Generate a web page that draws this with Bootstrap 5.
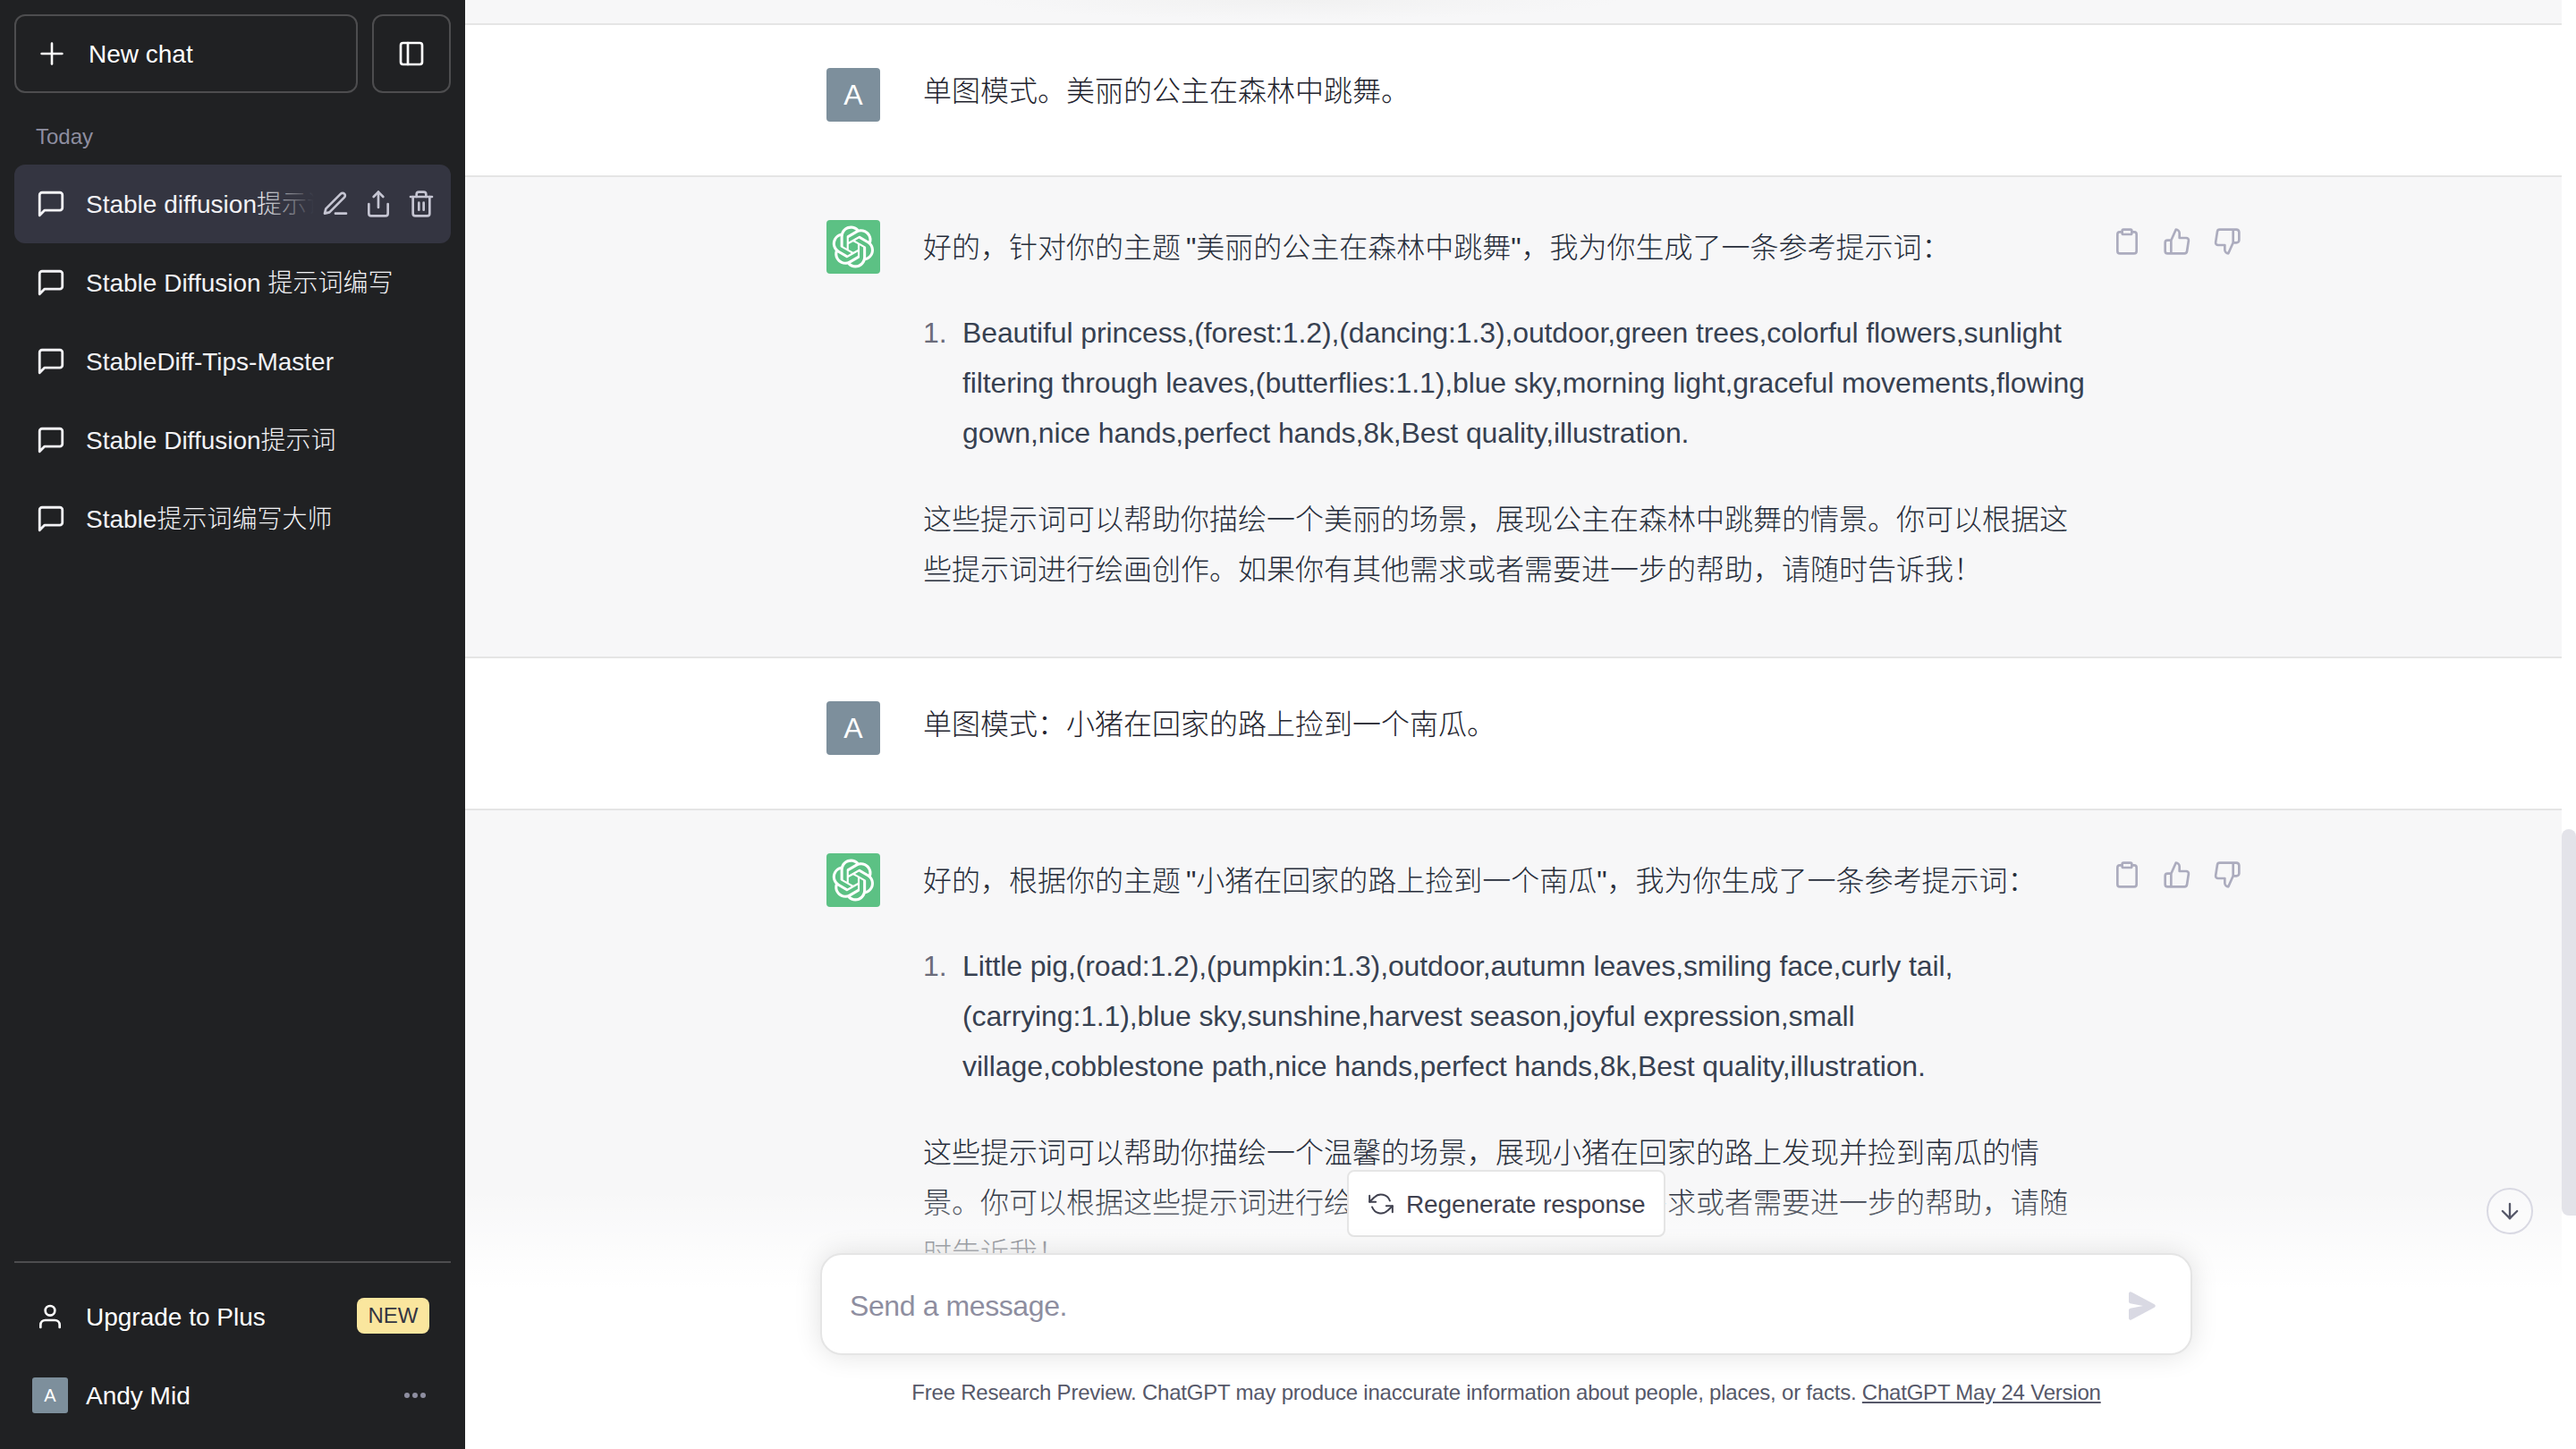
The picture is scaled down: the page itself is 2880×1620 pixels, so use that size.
<!DOCTYPE html>
<html lang="en">
<head>
<meta charset="utf-8">
<title>ChatGPT</title>
<link href="https://cdn.jsdelivr.net/npm/bootstrap@5.3.0/dist/css/bootstrap.min.css" rel="stylesheet">
<style>
html,body{height:100%;margin:0;overflow:hidden}
body{font-family:"Liberation Sans","Noto Sans CJK SC",sans-serif;background:#fff;font-weight:300}
.app-shell{height:1620px;width:2880px}
.side{width:520px;flex:none;background:#202123;color:#fff;padding:16px}
.ico{fill:none;stroke:currentColor;stroke-width:2;stroke-linecap:round;stroke-linejoin:round;flex:none}
.new-btn{flex:1;height:88px;border:2px solid #4d4d4f;border-radius:12px;padding:0 27px;gap:28px;font-size:28px;color:#fff}
.new-btn span{padding-top:2px}
.new-btn .ico{stroke-width:1.6}
.tog-btn{width:88px;height:88px;border:2px solid #4d4d4f;border-radius:12px;margin-left:16px}
.day{font-size:24px;color:#8e8ea0;padding:1px 24px 0;margin-top:32px;height:48px;line-height:32px}
.chat-it{height:88px;border-radius:12px;padding:0 24px;gap:22px;font-size:28px;color:#f2f2f5;white-space:nowrap}
.chat-it.on{background:#343541;padding-right:17px}
.chat-tx{position:relative;overflow:hidden;flex:1;padding-top:2px}
.chat-it.on .chat-tx::after{content:"";position:absolute;top:0;bottom:0;right:0;width:64px;background:linear-gradient(to right,rgba(52,53,65,0),#343541)}
.act-i{color:#c5c5d2;gap:16px;margin-left:-14px}
.foot-line{border-top:2px solid #4d4d4f;padding-top:16px}
.foot-it{height:88px;padding:0 24px;gap:24px;font-size:28px;color:#fff}
.foot-it .flex-grow-1{padding-top:2px}
.new-tag{background:#fae69e;color:#343541;font-size:24px;border-radius:8px;padding:0 9px;height:40px;line-height:40px;width:81px;text-align:center;margin-top:-2px}
.ava{width:60px;height:60px;border-radius:4px;flex:none;color:#fff;font-size:32px}
.ava-u{background:#7d8f9c}
.ava-g{background:#5cc184}
.ava-sm{width:40px;height:40px;font-size:20px;margin-left:-4px;margin-right:-4px;flex:none;border-radius:3px;color:#fff;background:#7d8f9c}
.dots{color:#8e8ea0;gap:3px;margin-right:4px}
.dots i{display:block;width:6px;height:6px;border-radius:50%;background:currentColor}
.main-pane{position:relative;overflow:hidden;background:#fff}
.scroll-col{width:2344px;height:1620px;overflow:hidden}
.topstub{height:28px;background:radial-gradient(ellipse 360px 22px at 930px 0,#f1f1f1,#f7f7f8);border-bottom:2px solid #e5e5e5}
.msg{border-bottom:2px solid #e5e5e5;color:#374151;font-size:32px;line-height:56px;padding-left:404px}
.msg-u{height:170px;background:#fff;padding-top:48px;color:#23242e}
.msg-a{height:538px;background:#f7f7f8;padding-top:48px}
.msg-tx{margin-left:48px;width:1306px;white-space:nowrap}
.msg-u .msg-tx{margin-top:-2px}
.msg-a .msg-tx{margin-top:3px}
.msg-tx p{margin:0 0 40px;word-spacing:-3px;color:#272e3b}
.msg-tx ol{margin:0 0 41px;padding:0;list-style:none;display:flex;letter-spacing:-.12px}
.msg-tx ol li{margin-top:-1px}
.num{width:44px;color:#6b6c7b;flex:none}
.acts{margin-left:24px;margin-top:8px;color:#acacbe;gap:24px;height:32px}
.sbar{position:absolute;right:0;top:927px;width:16px;height:432px;border-radius:8px 8px 0 8px;background:#e3e3e9}
.bottom-fade{position:absolute;left:0;bottom:0;width:2344px;height:330px;background:linear-gradient(to bottom,rgba(255,255,255,0) 40px,#fff 150px)}
.regen{position:absolute;left:986px;top:18px;width:356px;height:75px;background:#fff;border:2px solid #e5e5e5;border-radius:8px;gap:14px;font-size:28px;color:#40414f;padding-left:22px;letter-spacing:-.1px}
.regen .ico{stroke-width:1.7}
.regen span{padding-top:2px}
.down-btn{position:absolute;left:2260px;top:38px;width:52px;height:52px;border:2px solid #d9d9e3;border-radius:50%;color:#565869;background:rgba(255,255,255,.3)}
.ask{position:absolute;left:397px;top:111px;width:1534px;height:114px;background:#fff;border:2px solid #e5e5e5;border-radius:24px;box-shadow:0 0 30px rgba(0,0,0,.12);padding:3px 38px 0 31px;font-size:32px;color:#8e8ea0;letter-spacing:-.4px}
.legal{position:absolute;left:0;right:16px;top:251px;text-align:center;font-size:24px;line-height:32px;color:#565869;letter-spacing:-.22px}
.legal a{color:#565869}
</style>
</head>
<body>
<svg width="0" height="0" class="d-none">
  <symbol id="bloom" viewBox="0 0 41 41"><path d="M37.5324 16.8707C37.9808 15.5241 38.1363 14.0974 37.9886 12.6859C37.8409 11.2744 37.3934 9.91076 36.676 8.68622C35.6126 6.83404 33.9882 5.3676 32.0373 4.4985C30.0864 3.62941 27.9098 3.40259 25.8215 3.85078C24.8796 2.7893 23.7219 1.94125 22.4257 1.36341C21.1295 0.785575 19.7249 0.491269 18.3058 0.500197C16.1708 0.495044 14.0893 1.16803 12.3614 2.42214C10.6335 3.67624 9.34853 5.44666 8.6917 7.47815C7.30085 7.76286 5.98686 8.3414 4.8377 9.17505C3.68854 10.0087 2.73073 11.0782 2.02839 12.312C0.956464 14.1591 0.498905 16.2988 0.721698 18.4228C0.944492 20.5467 1.83612 22.5449 3.268 24.1293C2.81966 25.4759 2.66413 26.9026 2.81182 28.3141C2.95951 29.7256 3.40701 31.0892 4.12437 32.3138C5.18791 34.1659 6.8123 35.6322 8.76321 36.5013C10.7141 37.3704 12.8907 37.5973 14.9789 37.1492C15.9208 38.2107 17.0786 39.0587 18.3747 39.6366C19.6709 40.2144 21.0755 40.5087 22.4946 40.4998C24.6307 40.5054 26.7133 39.8321 28.4418 38.5772C30.1704 37.3223 31.4556 35.5506 32.1119 33.5179C33.5027 33.2332 34.8167 32.6547 35.9659 31.821C37.115 30.9874 38.0728 29.9178 38.7752 28.684C39.8458 26.8371 40.3023 24.6979 40.0789 22.5748C39.8556 20.4517 38.9639 18.4544 37.5324 16.8707ZM22.4978 37.8849C20.7443 37.8874 19.0459 37.2733 17.6994 36.1501C17.7601 36.117 17.8666 36.0586 17.936 36.0161L25.9004 31.4156C26.1003 31.3019 26.2663 31.137 26.3813 30.9378C26.4964 30.7386 26.5563 30.5124 26.5549 30.2825V19.0542L29.9213 20.998C29.9389 21.0068 29.9541 21.0198 29.9656 21.0359C29.977 21.052 29.9842 21.0707 29.9867 21.0902V30.3889C29.9842 32.375 29.1946 34.2791 27.7909 35.6841C26.3872 37.0892 24.4838 37.8806 22.4978 37.8849ZM6.39227 31.0064C5.51397 29.4888 5.19742 27.7107 5.49804 25.9832C5.55718 26.0187 5.66048 26.0818 5.73461 26.1244L13.699 30.7248C13.8975 30.8408 14.1233 30.902 14.3532 30.902C14.583 30.902 14.8088 30.8408 15.0073 30.7248L24.731 25.1103V28.9979C24.7321 29.0177 24.7283 29.0376 24.7199 29.0556C24.7115 29.0736 24.6988 29.0893 24.6829 29.1012L16.6317 33.7497C14.9096 34.7416 12.8643 35.0097 10.9447 34.4954C9.02506 33.9811 7.38785 32.7263 6.39227 31.0064ZM4.29707 13.6194C5.17156 12.0998 6.55279 10.9364 8.19885 10.3327C8.19885 10.4013 8.19491 10.5228 8.19491 10.6071V19.808C8.19351 20.0378 8.25334 20.2638 8.36823 20.4629C8.48312 20.6619 8.64893 20.8267 8.84863 20.9404L18.5723 26.5542L15.206 28.4979C15.1894 28.5089 15.1703 28.5155 15.1505 28.5173C15.1307 28.5191 15.1107 28.516 15.0924 28.5082L7.04046 23.8557C5.32135 22.8601 4.06716 21.2235 3.55289 19.3046C3.03862 17.3858 3.30624 15.3413 4.29707 13.6194ZM31.955 20.0556L22.2312 14.4411L25.5976 12.4981C25.6142 12.4872 25.6333 12.4805 25.6531 12.4787C25.6729 12.4769 25.6928 12.4801 25.7111 12.4879L33.7631 17.1364C34.9967 17.849 36.0017 18.8982 36.6606 20.1613C37.3194 21.4244 37.6047 22.849 37.4832 24.2684C37.3617 25.6878 36.8382 27.0432 35.9743 28.1759C35.1103 29.3086 33.9415 30.1717 32.6047 30.6641C32.6047 30.5947 32.6047 30.4733 32.6047 30.3889V21.188C32.6066 20.9586 32.5474 20.7328 32.4332 20.5338C32.319 20.3348 32.154 20.1698 31.955 20.0556ZM35.3055 15.0128C35.2464 14.9765 35.1431 14.9142 35.069 14.8717L27.1045 10.2712C26.906 10.1554 26.6803 10.0943 26.4504 10.0943C26.2206 10.0943 25.9948 10.1554 25.7963 10.2712L16.0726 15.8858V11.9982C16.0715 11.9783 16.0753 11.9585 16.0837 11.9405C16.0921 11.9225 16.1048 11.9068 16.1207 11.8949L24.1719 7.25025C25.4053 6.53903 26.8158 6.19376 28.2383 6.25482C29.6608 6.31589 31.0364 6.78077 32.2044 7.59508C33.3723 8.40939 34.2842 9.53945 34.8334 10.8531C35.3826 12.1667 35.5464 13.6095 35.3055 15.0128ZM14.2424 21.9419L10.8752 19.9981C10.8576 19.9893 10.8423 19.9763 10.8309 19.9602C10.8195 19.9441 10.8122 19.9254 10.8098 19.9058V10.6071C10.8107 9.18295 11.2173 7.78848 11.9819 6.58696C12.7466 5.38544 13.8377 4.42659 15.1275 3.82264C16.4173 3.21869 17.8524 2.99464 19.2649 3.1767C20.6775 3.35876 22.0089 3.93941 23.1034 4.85067C23.0427 4.88379 22.937 4.94215 22.8668 4.98473L14.9024 9.58517C14.7025 9.69878 14.5366 9.86356 14.4215 10.0626C14.3065 10.2616 14.2466 10.4877 14.2479 10.7175L14.2424 21.9419ZM16.071 17.9991L20.4018 15.4978L24.7325 17.9975V22.9985L20.4018 25.4983L16.071 22.9985V17.9991Z"/></symbol>
  <symbol id="bub" viewBox="0 0 24 24"><path d="M21 15a2 2 0 0 1-2 2H7l-4 4V5a2 2 0 0 1 2-2h14a2 2 0 0 1 2 2z"/></symbol>
  <symbol id="clip" viewBox="0 0 24 24"><path d="M16 4h2a2 2 0 0 1 2 2v14a2 2 0 0 1-2 2H6a2 2 0 0 1-2-2V6a2 2 0 0 1 2-2h2"/><rect x="8" y="2" width="8" height="4" rx="1"/></symbol>
  <symbol id="up" viewBox="0 0 24 24"><path d="M14 9V5a3 3 0 0 0-3-3l-4 9v11h11.28a2 2 0 0 0 2-1.7l1.38-9a2 2 0 0 0-2-2.3zM7 22H4a2 2 0 0 1-2-2v-7a2 2 0 0 1 2-2h3"/></symbol>
  <symbol id="dn" viewBox="0 0 24 24"><path d="M10 15v4a3 3 0 0 0 3 3l4-9V2H5.72a2 2 0 0 0-2 1.7l-1.38 9a2 2 0 0 0 2 2.3zm7-13h2.67A2.31 2.31 0 0 1 22 4v7a2.31 2.31 0 0 1-2.33 2H17"/></symbol>
</svg>
<div class="app-shell d-flex">
  <aside class="side d-flex flex-column">
    <div class="d-flex">
      <div class="new-btn d-flex align-items-center">
        <svg class="ico" width="26" height="26" viewBox="4 4 16 16"><line x1="12" y1="5" x2="12" y2="19"/><line x1="5" y1="12" x2="19" y2="12"/></svg>
        <span>New chat</span>
      </div>
      <div class="tog-btn d-flex align-items-center justify-content-center">
        <svg class="ico" width="32" height="32" viewBox="0 0 24 24"><rect x="3" y="3" width="18" height="18" rx="2"/><line x1="9" y1="3" x2="9" y2="21"/></svg>
      </div>
    </div>
    <div class="day">Today</div>
    <div class="chat-it on d-flex align-items-center">
      <svg class="ico" width="34" height="34"><use href="#bub"/></svg>
      <div class="chat-tx">Stable diffusion提示词</div>
      <div class="act-i d-flex">
        <svg class="ico" width="32" height="32" viewBox="0 0 24 24"><path d="M12 20h9"/><path d="M16.5 3.5a2.121 2.121 0 0 1 3 3L7 19l-4 1 1-4L16.5 3.5z"/></svg>
        <svg class="ico" width="32" height="32" viewBox="0 0 24 24"><path d="M4 12v8a2 2 0 0 0 2 2h12a2 2 0 0 0 2-2v-8"/><polyline points="16 6 12 2 8 6"/><line x1="12" y1="2" x2="12" y2="15"/></svg>
        <svg class="ico" width="32" height="32" viewBox="0 0 24 24"><polyline points="3 6 5 6 21 6"/><path d="M19 6v14a2 2 0 0 1-2 2H7a2 2 0 0 1-2-2V6m3 0V4a2 2 0 0 1 2-2h4a2 2 0 0 1 2 2v2"/><line x1="10" y1="11" x2="10" y2="17"/><line x1="14" y1="11" x2="14" y2="17"/></svg>
      </div>
    </div>
    <div class="chat-it d-flex align-items-center"><svg class="ico" width="34" height="34"><use href="#bub"/></svg><div class="chat-tx">Stable Diffusion 提示词编写</div></div>
    <div class="chat-it d-flex align-items-center"><svg class="ico" width="34" height="34"><use href="#bub"/></svg><div class="chat-tx">StableDiff-Tips-Master</div></div>
    <div class="chat-it d-flex align-items-center"><svg class="ico" width="34" height="34"><use href="#bub"/></svg><div class="chat-tx">Stable Diffusion提示词</div></div>
    <div class="chat-it d-flex align-items-center"><svg class="ico" width="34" height="34"><use href="#bub"/></svg><div class="chat-tx">Stable提示词编写大师</div></div>
    <div class="foot-line mt-auto">
      <div class="foot-it d-flex align-items-center">
        <svg class="ico" width="32" height="32" viewBox="0 0 24 24"><path d="M20 21v-2a4 4 0 0 0-4-4H8a4 4 0 0 0-4 4v2"/><circle cx="12" cy="7" r="4"/></svg>
        <span class="flex-grow-1">Upgrade to Plus</span>
        <span class="new-tag">NEW</span>
      </div>
      <div class="foot-it d-flex align-items-center">
        <div class="ava-sm d-flex align-items-center justify-content-center">A</div>
        <span class="flex-grow-1">Andy Mid</span>
        <div class="dots d-flex"><i></i><i></i><i></i></div>
      </div>
    </div>
  </aside>
  <main class="main-pane flex-grow-1">
    <div class="scroll-col">
      <div class="topstub"></div>
      <section class="msg msg-u d-flex">
        <div class="ava ava-u d-flex align-items-center justify-content-center">A</div>
        <div class="msg-tx">单图模式。美丽的公主在森林中跳舞。</div>
      </section>
      <section class="msg msg-a d-flex">
        <div class="ava ava-g d-flex align-items-center justify-content-center">
          <svg width="48" height="48" fill="#fff"><use href="#bloom"/></svg>
        </div>
        <div class="msg-tx">
          <p>好的，针对你的主题 "美丽的公主在森林中跳舞"，我为你生成了一条参考提示词：</p>
          <ol><li class="num">1.</li><li>Beautiful princess,(forest:1.2),(dancing:1.3),outdoor,green trees,colorful flowers,sunlight<br>filtering through leaves,(butterflies:1.1),blue sky,morning light,graceful movements,flowing<br>gown,nice hands,perfect hands,8k,Best quality,illustration.</li></ol>
          <p>这些提示词可以帮助你描绘一个美丽的场景，展现公主在森林中跳舞的情景。你可以根据这<br>些提示词进行绘画创作。如果你有其他需求或者需要进一步的帮助，请随时告诉我！</p>
        </div>
        <div class="acts d-flex">
          <svg class="ico" width="32" height="32"><use href="#clip"/></svg>
          <svg class="ico" width="32" height="32"><use href="#up"/></svg>
          <svg class="ico" width="32" height="32"><use href="#dn"/></svg>
        </div>
      </section>
      <section class="msg msg-u d-flex">
        <div class="ava ava-u d-flex align-items-center justify-content-center">A</div>
        <div class="msg-tx">单图模式：小猪在回家的路上捡到一个南瓜。</div>
      </section>
      <section class="msg msg-a d-flex">
        <div class="ava ava-g d-flex align-items-center justify-content-center">
          <svg width="48" height="48" fill="#fff"><use href="#bloom"/></svg>
        </div>
        <div class="msg-tx">
          <p>好的，根据你的主题 "小猪在回家的路上捡到一个南瓜"，我为你生成了一条参考提示词：</p>
          <ol><li class="num">1.</li><li>Little pig,(road:1.2),(pumpkin:1.3),outdoor,autumn leaves,smiling face,curly tail,<br>(carrying:1.1),blue sky,sunshine,harvest season,joyful expression,small<br>village,cobblestone path,nice hands,perfect hands,8k,Best quality,illustration.</li></ol>
          <p>这些提示词可以帮助你描绘一个温馨的场景，展现小猪在回家的路上发现并捡到南瓜的情<br>景。你可以根据这些提示词进行绘画创作。如果你有其他需求或者需要进一步的帮助，请随<br>时告诉我！</p>
        </div>
        <div class="acts d-flex">
          <svg class="ico" width="32" height="32"><use href="#clip"/></svg>
          <svg class="ico" width="32" height="32"><use href="#up"/></svg>
          <svg class="ico" width="32" height="32"><use href="#dn"/></svg>
        </div>
      </section>
    </div>
    <div class="sbar"></div>
    <div class="bottom-fade">
      <div class="regen d-flex align-items-center">
        <svg class="ico" width="28" height="28" viewBox="0 0 24 24"><polyline points="1 4 1 10 7 10"/><polyline points="23 20 23 14 17 14"/><path d="M20.49 9A9 9 0 0 0 5.64 5.64L1 10m22 4l-4.64 4.36A9 9 0 0 1 3.51 15"/></svg>
        <span>Regenerate response</span>
      </div>
      <div class="down-btn d-flex align-items-center justify-content-center">
        <svg class="ico" width="28" height="28" viewBox="0 0 24 24"><line x1="12" y1="5" x2="12" y2="19"/><polyline points="19 12 12 19 5 12"/></svg>
      </div>
      <div class="ask d-flex align-items-center">
        <span class="flex-grow-1">Send a message.</span>
        <svg width="32" height="32" viewBox="0 0 16 16" fill="#d9d9e3"><path d="M.5 1.163A1 1 0 0 1 1.97.28l12.868 6.837a1 1 0 0 1 0 1.766L1.969 15.72A1 1 0 0 1 .5 14.836V10.33a1 1 0 0 1 .816-.983L8.5 8 1.316 6.653A1 1 0 0 1 .5 5.67V1.163Z"/></svg>
      </div>
      <div class="legal">Free Research Preview. ChatGPT may produce inaccurate information about people, places, or facts. <a href="#">ChatGPT May 24 Version</a></div>
    </div>
  </main>
</div>
<script src="https://cdn.jsdelivr.net/npm/bootstrap@5.3.0/dist/js/bootstrap.bundle.min.js"></script>
</body>
</html>
